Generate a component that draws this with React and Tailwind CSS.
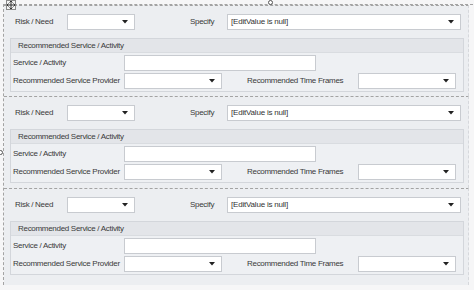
import React from "react";

const font = { fontFamily: '"Liberation Sans", Arial, sans-serif' };

function Arrow() {
  return (
    <svg width="6" height="4" viewBox="0 0 6 4" className="shrink-0">
      <path d="M0 0 H6 L3 3.5 Z" fill="#222" />
    </svg>
  );
}

function Combo({ w, text }) {
  return (
    <div
      className={`flex h-[16px] items-center justify-between border border-[#c8cbd0] bg-white pl-[3px] pr-[6px] ${w}`}
    >
      <span className="whitespace-nowrap text-[8px] leading-none tracking-[-0.2px] text-[#333]">{text}</span>
      <Arrow />
    </div>
  );
}

function Label({ w, children, className = "" }) {
  return (
    <span className={`whitespace-nowrap text-[8px] tracking-[-0.3px] text-[#3a3a3a] ${w} ${className}`}>
      {children}
    </span>
  );
}

function Panel({ h }) {
  return (
    <div
      className={`flex w-[465px] flex-col border-t border-dashed border-[#a3a3a3] bg-[#eceef1] border-r border-r-[#d6d8dc] ${h}`}
    >
      <div className="mt-[8px] flex h-[16px] items-center">
        <Label w="w-[63px]" className="pl-[11px]">Risk / Need</Label>
        <Combo w="w-[68px]" />
        <Label w="w-[37px]" className="ml-[55px]">Specify</Label>
        <Combo w="w-[234px]" text="[EditValue is null]" />
      </div>

      <div className="ml-[6px] mt-[8px] flex h-[54px] w-[454px] flex-col border border-[#d3d6db] bg-[#eef0f3]">
        <div className="flex h-[14px] items-center whitespace-nowrap border-b border-[#d9dce0] bg-[#e3e5e9] pl-[7px] text-[8px] tracking-[-0.3px] text-[#3a3a3a]">
          Recommended Service / Activity
        </div>
        <div className="mt-[2px] flex h-[16px] items-center">
          <Label w="w-[113px]" className="pl-[2px]">Service / Activity</Label>
          <div className="h-[16px] w-[192px] border border-[#c8cbd0] bg-white" />
        </div>
        <div className="mt-[2px] flex h-[16px] items-center">
          <Label w="w-[113px]" className="pl-[2px]">Recommended Service Provider</Label>
          <Combo w="w-[98px]" />
          <Label w="w-[111px]" className="ml-[25px]">Recommended Time Frames</Label>
          <Combo w="w-[98px]" />
        </div>
      </div>
    </div>
  );
}

export default function App() {
  return (
    <div
      className="relative h-[290px] w-[474px] overflow-hidden bg-[#f6f6f7] leading-none"
      style={font}
    >
      <div className="ml-[3px] mt-[4px] flex w-[470px] flex-col border-l border-dashed border-[#a3a3a3]">
        <div className="border-t border-dashed border-[#a3a3a3]">
          <Panel h="h-[91px]" />
        </div>
        <Panel h="h-[92px]" />
        <Panel h="h-[97px]" />
      </div>

      {/* designer handles */}
      <div className="absolute left-[6px] top-0 flex h-[10px] w-[10px] items-center justify-center border border-[#8a8a8a] bg-[#f4f4f4]">
        <svg width="8" height="8" viewBox="0 0 8 8">
          <path
            d="M4 0 V8 M0 4 H8 M4 0 L2.5 1.5 M4 0 L5.5 1.5 M4 8 L2.5 6.5 M4 8 L5.5 6.5 M0 4 L1.5 2.5 M0 4 L1.5 5.5 M8 4 L6.5 2.5 M8 4 L6.5 5.5"
            stroke="#333"
            strokeWidth="1"
            fill="none"
          />
        </svg>
      </div>
      <div className="absolute left-[268px] top-0 h-[5px] w-[5px] rounded-full border border-[#555] bg-white" />
      <div className="absolute left-[-2px] top-[150px] h-[5px] w-[5px] rounded-full border border-[#555] bg-white" />
    </div>
  );
}
